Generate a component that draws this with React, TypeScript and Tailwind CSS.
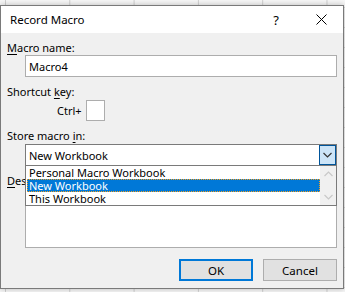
import React from "react";

const Chevron = ({ up = false, color = "#333" }: { up?: boolean; color?: string }) => (
  <svg width="9" height="6" viewBox="0 0 9 6" className="block">
    <path
      d={up ? "M0.5 5 L4.5 1 L8.5 5" : "M0.5 1 L4.5 5 L8.5 1"}
      fill="none"
      stroke={color}
      strokeWidth="1.2"
    />
  </svg>
);

export default function App() {
  return (
    <div
      className="relative w-[345px] h-[292px] overflow-hidden bg-[#f7f7f7] bg-[linear-gradient(to_right,#d0d0d0_1px,transparent_1px),linear-gradient(to_bottom,#d8d8d8_1px,transparent_1px)] bg-[length:64.3px_20px] bg-[position:5px_7px]"
      style={{ fontFamily: '"Segoe UI", "Noto Sans", Arial, sans-serif' }}
    >
      <div className="absolute left-0 top-[5px] w-[344px] h-[284px] border border-[#7a7a7a] bg-[#f0f0f0] flex flex-col text-[11px] text-black shadow-[0_0_6px_rgba(0,0,0,0.25)]">
        {/* Title bar */}
        <div className="h-[27px] bg-white flex items-center shrink-0">
          <span className="pl-[9px] text-[11.5px] leading-[16px]">Record Macro</span>
          <span className="ml-auto mr-[37px] text-[13px] leading-[16px]">?</span>
          <svg width="11" height="11" viewBox="0 0 11 11" className="mr-[16px]">
            <path d="M0.5 0.5 L10.5 10.5 M10.5 0.5 L0.5 10.5" stroke="#000" strokeWidth="1" />
          </svg>
        </div>

        {/* Body */}
        <div className="flex flex-col flex-1">
          <div className="mt-[7px] pl-[6px] leading-[15px]">
            <span className="underline underline-offset-2">M</span>acro name:
          </div>
          <div className="ml-[24px] w-[312px] h-[22px] bg-white border border-[#adadad] flex items-center pl-[3px] leading-[15px]">
            Macro4
          </div>

          <div className="mt-[7px] pl-[6px] leading-[15px]">
            Shortcut <span className="underline underline-offset-2">k</span>ey:
          </div>
          <div className="mt-[1px] flex items-center">
            <span className="ml-[56px] leading-[15px]">Ctrl+</span>
            <div className="ml-[4px] w-[19px] h-[21px] bg-white border border-[#adadad]" />
          </div>

          <div className="mt-[7px] pl-[6px] leading-[15px]">
            Store macro <span className="underline underline-offset-2">i</span>n:
          </div>
          <div className="relative mt-[1px] ml-[24px] w-[312px] h-[22px] bg-white border border-[#7a7a7a] flex items-center">
            <span className="pl-[3px] leading-[15px]">New Workbook</span>
            <div className="ml-auto mr-0 w-[17px] h-[20px] bg-[#cce4f7] border border-[#005499] flex items-center justify-center">
              <Chevron />
            </div>
            {/* Dropdown list */}
            <div className="absolute left-[-1px] top-[20px] w-[312px] h-[41px] bg-white border border-[#7a7a7a] flex z-10">
              <div className="flex-1 flex flex-col pl-[1px] pt-0">
                <div className="h-[13px] leading-[13px] pl-[2px]">Personal Macro Workbook</div>
                <div className="h-[13px] leading-[11px] pl-[1px] bg-[#0078d7] text-white border border-dotted border-[#f4a020]">
                  New Workbook
                </div>
                <div className="h-[13px] leading-[13px] pl-[2px]">This Workbook</div>
              </div>
              <div className="w-[16px] bg-[#f0f0f0] flex flex-col items-center justify-between py-[5px] mr-0">
                <Chevron up color="#c8c8c8" />
                <Chevron color="#c8c8c8" />
              </div>
            </div>
          </div>

          <div className="mt-[7px] pl-[6px] leading-[15px]">
            <span className="underline underline-offset-2">D</span>escription:
          </div>
          <div className="mt-[1px] ml-[24px] w-[312px] h-[59px] bg-white border border-[#adadad]" />

          <div className="mt-[11px] flex justify-end gap-[10px] mr-[6px]">
            <button className="w-[74px] h-[22px] bg-[#e1e1e1] border-2 border-[#0078d7] text-[11.5px] leading-[15px] text-black">
              OK
            </button>
            <button className="w-[74px] h-[22px] bg-[#e1e1e1] border border-[#adadad] text-[11.5px] leading-[15px] text-black">
              Cancel
            </button>
          </div>
        </div>
      </div>
    </div>
  );
}
